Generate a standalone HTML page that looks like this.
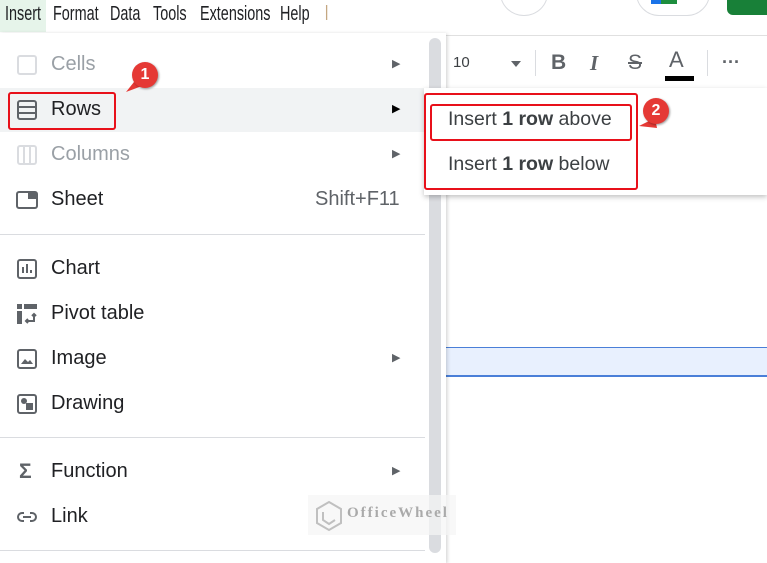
<!DOCTYPE html>
<html><head><meta charset="utf-8"><style>
*{margin:0;padding:0;box-sizing:border-box}
body{width:767px;height:553px;overflow:hidden;background:#fff;font-family:"Liberation Sans",Arial,sans-serif;position:relative;color:#202124}
.abs{position:absolute}
.mb{position:absolute;top:3px;font-size:20px;color:#202124;transform:scaleX(0.72);transform-origin:left top;white-space:nowrap}
.it{position:absolute;left:0;width:425px;height:45px;font-size:20px;line-height:45px}
.it .t{position:absolute;left:51px;top:0}
.it .ic{position:absolute;left:16px;top:12px;width:22px;height:22px}
.arr{position:absolute;left:392px;top:0;font-size:11px;color:#5f6368}
.dis{color:#9aa0a6}
.sep{position:absolute;left:0;width:425px;height:1px;background:#dadce0}
.badge{position:absolute;width:26px;height:26px;border-radius:50%;background:#e53935;color:#fff;font-weight:bold;font-size:16px;text-align:center;line-height:26px;box-shadow:1px 1px 2px rgba(0,0,0,.4)}
</style></head><body>
<div class="abs" style="left:0;top:0;width:46px;height:32px;background:#e6f4ea"></div>
<div class="mb" style="left:5px">Insert</div>
<div class="mb" style="left:53px">Format</div>
<div class="mb" style="left:110px">Data</div>
<div class="mb" style="left:153px">Tools</div>
<div class="mb" style="left:200px">Extensions</div>
<div class="mb" style="left:280px">Help</div>
<div class="mb" style="left:325px;color:#c4a882">l</div>
<div class="abs" style="left:500px;top:-30px;width:48px;height:46px;border:1px solid #dadce0;border-radius:50%"></div>
<div class="abs" style="left:636px;top:-30px;width:74px;height:46px;border:1px solid #dadce0;border-radius:24px"></div>
<div class="abs" style="left:651px;top:0;width:10px;height:4px;background:#1a73e8"></div>
<div class="abs" style="left:661px;top:0;width:16px;height:4px;background:#1e8e3e"></div>
<div class="abs" style="left:727px;top:-10px;width:50px;height:25px;background:#188038;border-radius:6px"></div>
<div class="abs" style="left:440px;top:35px;width:327px;height:1px;background:#e0e0e0"></div>
<div class="abs" style="left:453px;top:54px;font-size:15px;color:#3c4043">10</div>
<svg class="abs" style="left:510px;top:60px" width="12" height="8"><path d="M1 1h10L6 7z" fill="#5f6368"/></svg>
<div class="abs" style="left:535px;top:50px;width:1px;height:26px;background:#dadce0"></div>
<div class="abs" style="left:551px;top:51px;font-size:21px;font-weight:bold;color:#5f6368">B</div>
<div class="abs" style="left:590px;top:51px;font-size:21px;font-style:italic;font-weight:bold;color:#5f6368;font-family:'Liberation Serif',serif">I</div>
<div class="abs" style="left:628px;top:51px;font-size:21px;color:#5f6368;text-decoration:line-through">S</div>
<div class="abs" style="left:669px;top:47px;font-size:22px;color:#5f6368">A</div>
<div class="abs" style="left:665px;top:76px;width:29px;height:5px;background:#000"></div>
<div class="abs" style="left:707px;top:50px;width:1px;height:26px;background:#dadce0"></div>
<div class="abs" style="left:722px;top:52px;font-size:18px;font-weight:bold;color:#5f6368">···</div>
<div class="abs" style="left:446px;top:347px;width:321px;height:30px;background:#e8f0fe;border-top:1px solid #4a7fd8;border-bottom:2px solid #4a7fd8"></div>
<div class="abs" style="left:0;top:33px;width:446px;height:530px;background:#fff;box-shadow:1px 1px 4px rgba(0,0,0,.2)"></div>
<div class="abs" style="left:429px;top:38px;width:12px;height:515px;background:#dadce0;border-radius:6px"></div>
<div class="abs" style="left:0;top:88px;width:425px;height:44px;background:#f1f3f4"></div>
<div class="it dis" style="top:42px"><svg class="ic" viewBox="0 0 22 22"><rect x="2" y="2" width="18" height="18" rx="2" fill="none" stroke="#dadce0" stroke-width="2"/></svg><span class="t">Cells</span><span class="arr">▶</span></div>
<div class="it" style="top:87px"><svg class="ic" viewBox="0 0 22 22"><rect x="2" y="2" width="18" height="18" rx="2" fill="none" stroke="#5f6368" stroke-width="2"/><path d="M2 8h18M2 14h18" stroke="#5f6368" stroke-width="2"/></svg><span class="t">Rows</span><span class="arr" style="color:#000">▶</span></div>
<div class="it dis" style="top:132px"><svg class="ic" viewBox="0 0 22 22"><rect x="2" y="2" width="18" height="18" rx="2" fill="none" stroke="#dadce0" stroke-width="2"/><path d="M8 2v18M14 2v18" stroke="#dadce0" stroke-width="2"/></svg><span class="t">Columns</span><span class="arr">▶</span></div>
<div class="it" style="top:177px"><svg class="ic" viewBox="0 0 22 22"><rect x="1" y="3" width="20" height="16" rx="2" fill="none" stroke="#5f6368" stroke-width="2"/><rect x="12" y="3" width="9" height="7" fill="#5f6368"/></svg><span class="t">Sheet</span><span style="position:absolute;left:315px;color:#5f6368">Shift+F11</span></div>
<div class="sep" style="top:234px"></div>
<div class="it" style="top:246px"><svg class="ic" viewBox="0 0 22 22"><rect x="2" y="2" width="18" height="18" rx="2" fill="none" stroke="#5f6368" stroke-width="2"/><path d="M7 15V9M11 15V6M15 15v-3" stroke="#5f6368" stroke-width="2"/></svg><span class="t">Chart</span></div>
<div class="it" style="top:291px"><svg class="ic" viewBox="0 0 22 22"><rect x="1" y="1" width="5" height="5" fill="#5f6368"/><rect x="8" y="1" width="13" height="5" fill="#5f6368"/><rect x="1" y="8" width="5" height="13" fill="#5f6368"/><path d="M10 18h8v-7M16 13l2-2 2 2M12 16l-2 2 2 2" fill="none" stroke="#5f6368" stroke-width="2"/></svg><span class="t">Pivot table</span></div>
<div class="it" style="top:336px"><svg class="ic" viewBox="0 0 22 22"><rect x="2" y="2" width="18" height="18" rx="2" fill="none" stroke="#5f6368" stroke-width="2"/><path d="M5 16l4-5 3 3 2-2 3 4z" fill="#5f6368"/></svg><span class="t">Image</span><span class="arr">▶</span></div>
<div class="it" style="top:381px"><svg class="ic" viewBox="0 0 22 22"><rect x="2" y="2" width="18" height="18" rx="2" fill="none" stroke="#5f6368" stroke-width="2"/><circle cx="8" cy="8" r="3" fill="#5f6368"/><rect x="10" y="10" width="7" height="7" fill="#5f6368"/></svg><span class="t">Drawing</span></div>
<div class="sep" style="top:437px"></div>
<div class="it" style="top:449px"><span style="position:absolute;left:19px;font-size:21px;color:#5f6368;font-weight:bold">Σ</span><span class="t">Function</span><span class="arr">▶</span></div>
<div class="it" style="top:494px"><svg class="ic" viewBox="0 0 22 22"><path d="M8 7H6a4 4 0 000 8h2M14 7h2a4 4 0 010 8h-2M7 11h8" fill="none" stroke="#5f6368" stroke-width="2"/></svg><span class="t">Link</span></div>
<div class="sep" style="top:550px"></div>
<div class="abs" style="left:308px;top:495px;width:148px;height:40px;background:rgba(245,245,245,.7)"></div>
<svg class="abs" style="left:313px;top:500px" width="32" height="32" viewBox="0 0 32 32"><path d="M16 2l12 7v14l-12 7-12-7V9z" fill="none" stroke="#c0c0c0" stroke-width="2"/><path d="M10 12v8l6 4 6-4" fill="none" stroke="#c0c0c0" stroke-width="2"/></svg>
<div class="abs" style="left:347px;top:505px;font-size:15px;color:#aaa;font-family:'Liberation Serif',serif;letter-spacing:2px;font-weight:bold">OfficeWheel</div>
<div class="abs" style="left:424px;top:88px;width:343px;height:107px;background:#fff;box-shadow:0 2px 5px rgba(0,0,0,.25)"></div>
<div class="abs" style="left:448px;top:108px;font-size:19.5px;color:#3c4043">Insert <b>1 row</b> above</div>
<div class="abs" style="left:448px;top:153px;font-size:19.5px;color:#3c4043">Insert <b>1 row</b> below</div>
<div class="abs" style="left:8px;top:92px;width:108px;height:38px;border:2px solid #e8101a;border-radius:3px"></div>
<div class="abs" style="left:424px;top:93px;width:214px;height:97px;border:2px solid #e8101a;border-radius:3px"></div>
<div class="abs" style="left:430px;top:104px;width:202px;height:37px;border:2px solid #e8101a;border-radius:3px"></div>
<svg class="abs" style="left:120px;top:60px" width="45" height="35"><path d="M14 22L6 32 22 26z" fill="#e53935"/></svg>
<div class="badge" style="left:132px;top:62px">1</div>
<svg class="abs" style="left:633px;top:100px" width="40" height="40"><path d="M22 18L6 26 24 28z" fill="#e53935"/></svg>
<div class="badge" style="left:643px;top:98px">2</div>
</body></html>
